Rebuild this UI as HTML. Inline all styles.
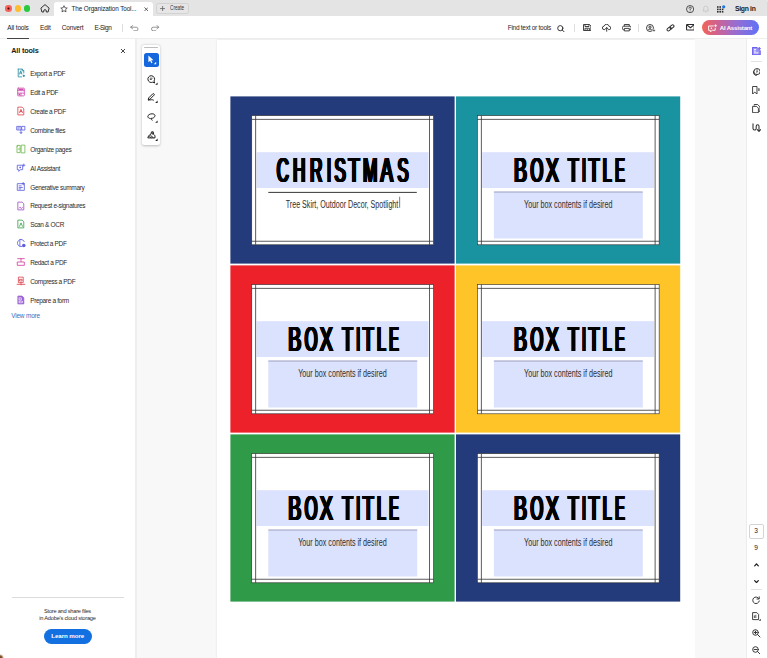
<!DOCTYPE html>
<html><head><meta charset="utf-8">
<style>
*{margin:0;padding:0;box-sizing:border-box}
html,body{width:768px;height:658px;overflow:hidden;background:#fff;font-family:"Liberation Sans",sans-serif;color:#222}
.a{position:absolute}
.t{position:absolute;white-space:nowrap;line-height:1}
</style></head><body>
<!-- tab bar -->
<div class="a" style="left:0;top:0;width:768px;height:16px;background:#e4e4e4"></div>
<div class="a" style="left:5.2px;top:5.2px;width:6.4px;height:6.4px;border-radius:50%;background:radial-gradient(circle,#4a0606 0,#6a1010 0.6px,#f7645d 1.6px)"></div>
<div class="a" style="left:14.7px;top:5.2px;width:6.4px;height:6.4px;border-radius:50%;background:#fdbd2e"></div>
<div class="a" style="left:24.1px;top:5.2px;width:6.4px;height:6.4px;border-radius:50%;background:#28c840"></div>
<div class="a" style="left:54px;top:1.5px;width:99px;height:15px;background:#fff;border-radius:3px 3px 0 0"></div>
<div class="a" style="left:155.5px;top:3.2px;width:33px;height:11.2px;border:0.6px solid #d2d2d2;border-radius:2.5px;background:#e6e6e6"></div>
<div class="t" style="left:169.9px;top:5.1px;font-size:6.7px;color:#333;transform:scaleX(0.7);transform-origin:0 0">Create</div>
<div class="t" style="left:735px;top:6.3px;font-size:6.8px;letter-spacing:-0.3px;font-weight:bold;color:#1a1a1a">Sign in</div>
<!-- toolbar -->
<div class="a" style="left:0;top:16px;width:768px;height:23px;background:#fff;border-bottom:1px solid #eeeeee;box-shadow:0 0.5px 1px rgba(0,0,0,0.03)"></div>
<div class="t" style="left:7.3px;top:24.5px;font-size:6.5px;letter-spacing:-0.15px">All tools</div>
<div class="a" style="left:7.3px;top:37.5px;width:22px;height:1.5px;background:#444"></div>
<div class="t" style="left:40px;top:24.5px;font-size:6.5px;letter-spacing:-0.15px">Edit</div>
<div class="t" style="left:61.7px;top:24.5px;font-size:6.5px;letter-spacing:-0.15px">Convert</div>
<div class="t" style="left:94.5px;top:24.5px;font-size:6.5px;letter-spacing:-0.45px">E-Sign</div>
<div class="t" style="left:507.7px;top:24.6px;font-size:6.5px;letter-spacing:-0.27px;color:#1f1f1f">Find text or tools</div>
<div class="a" style="left:702.2px;top:20.3px;width:57.3px;height:15px;border-radius:8px;background:linear-gradient(90deg,#f26457 0%,#cc6294 28%,#9a6dcf 58%,#5e72f7 100%)"></div>
<div class="t" style="left:719.8px;top:25px;font-size:6px;font-weight:bold;color:#fff;letter-spacing:-0.18px">AI Assistant</div>

<!-- left panel -->
<div class="a" style="left:0;top:39px;width:135px;height:619px;background:#fff"></div>
<div class="a" style="left:135px;top:39px;width:2.3px;height:619px;background:#eeeeee"></div>
<div class="a" style="left:137.3px;top:39px;width:79.7px;height:619px;background:#f8f8f8"></div>
<div class="a" style="left:217px;top:39.5px;width:478px;height:619px;background:#fff;box-shadow:0 0 2.5px rgba(0,0,0,0.09)"></div>
<div class="a" style="left:695px;top:39px;width:50.5px;height:619px;background:#f8f8f8"></div>
<div class="a" style="left:745.5px;top:39px;width:22.5px;height:619px;background:#fff;border-left:1px solid #ececec"></div>

<div class="t" style="left:11.2px;top:47.3px;font-size:7.3px;letter-spacing:-0.15px;font-weight:bold;color:#1d1d1d">All tools</div>

<svg class="a" style="left:15.8px;top:68.00px" width="10" height="10" viewBox="0 0 18 18" stroke="#2a8fa3" stroke-width="1.5" stroke-linejoin="round" stroke-linecap="round"><path d="M4 2h7l3 3v4M4 2v14h6M11 2v3h3" fill="none"/><path d="M6.5 11l2-6 2 6M7.2 9h2.6" fill="none"/><circle cx="14" cy="14" r="2" fill="#2a8fa3" stroke="none"/></svg>
<div class="t" style="left:30.2px;top:71.40px;font-size:6.5px;letter-spacing:-0.34px;color:#2b2b2b">Export a PDF</div>
<svg class="a" style="left:15.8px;top:86.93px" width="10" height="10" viewBox="0 0 18 18" stroke="#d24fb0" stroke-width="1.5" stroke-linejoin="round" stroke-linecap="round"><rect x="3" y="2" width="12" height="14" rx="1" fill="none"/><path d="M3 6.5h12M3 11h12M9 11v5" fill="none"/><rect x="4.5" y="3" width="9" height="2.5" fill="#d24fb0" stroke="none"/><rect x="4.5" y="12" width="3" height="3" fill="#d24fb0" stroke="none"/></svg>
<div class="t" style="left:30.2px;top:90.25px;font-size:6.5px;letter-spacing:-0.34px;color:#2b2b2b">Edit a PDF</div>
<svg class="a" style="left:15.8px;top:105.86px" width="10" height="10" viewBox="0 0 18 18" stroke="#dd4550" stroke-width="1.5" stroke-linejoin="round" stroke-linecap="round"><path d="M4 2h7l3 3v11H4z" fill="none"/><path d="M6.5 12l2.5-6 2.5 6M7.5 10h3" fill="none"/></svg>
<div class="t" style="left:30.2px;top:109.10px;font-size:6.5px;letter-spacing:-0.34px;color:#2b2b2b">Create a PDF</div>
<svg class="a" style="left:15.8px;top:124.79px" width="10" height="10" viewBox="0 0 18 18" stroke="#5d5fe0" stroke-width="1.5" stroke-linejoin="round" stroke-linecap="round"><rect x="2" y="2.5" width="7" height="6.5" fill="none"/><rect x="11" y="2.5" width="5" height="6.5" fill="none"/><path d="M3.5 5h3M3.5 7h2" stroke-width="1.2"/><path d="M9 9v6M7 13l2 2.2 2-2.2" fill="none"/></svg>
<div class="t" style="left:30.2px;top:127.95px;font-size:6.5px;letter-spacing:-0.34px;color:#2b2b2b">Combine files</div>
<svg class="a" style="left:15.8px;top:143.72px" width="10" height="10" viewBox="0 0 18 18" stroke="#72bb52" stroke-width="1.5" stroke-linejoin="round" stroke-linecap="round"><rect x="10" y="2" width="6" height="14" fill="none"/><path d="M2.5 2.5h5v13h-5zM4 9h3" fill="none"/><path d="M2 5l2-2" fill="none"/></svg>
<div class="t" style="left:30.2px;top:146.80px;font-size:6.5px;letter-spacing:-0.34px;color:#2b2b2b">Organize pages</div>
<svg class="a" style="left:15.8px;top:162.65px" width="10" height="10" viewBox="0 0 18 18" stroke="#5d5fe0" stroke-width="1.5" stroke-linejoin="round" stroke-linecap="round"><path d="M3 4h9v8H8l-3 3v-3H3z" fill="none"/><path d="M14 2v4M12 4h4" fill="none"/><circle cx="7.5" cy="8" r="1.5" fill="#5d5fe0" stroke="none"/></svg>
<div class="t" style="left:30.2px;top:165.65px;font-size:6.5px;letter-spacing:-0.34px;color:#2b2b2b">AI Assistant</div>
<svg class="a" style="left:15.8px;top:181.58px" width="10" height="10" viewBox="0 0 18 18" stroke="#5d5fe0" stroke-width="1.5" stroke-linejoin="round" stroke-linecap="round"><rect x="3" y="3" width="12" height="12" fill="none"/><path d="M5.5 7h4M5.5 10h6M5.5 12.5h3" fill="none"/><path d="M13 1v4M11 3h4" fill="none"/></svg>
<div class="t" style="left:30.2px;top:184.50px;font-size:6.5px;letter-spacing:-0.34px;color:#2b2b2b">Generative summary</div>
<svg class="a" style="left:15.8px;top:200.51px" width="10" height="10" viewBox="0 0 18 18" stroke="#a652c8" stroke-width="1.5" stroke-linejoin="round" stroke-linecap="round"><path d="M4 2h7l3 3v11H4z" fill="none"/><path d="M6 12.5c1-2 2-2 2.5 0s1.5 1 3.5-1" fill="none"/></svg>
<div class="t" style="left:30.2px;top:203.35px;font-size:6.5px;letter-spacing:-0.34px;color:#2b2b2b">Request e-signatures</div>
<svg class="a" style="left:15.8px;top:219.44px" width="10" height="10" viewBox="0 0 18 18" stroke="#3aa34a" stroke-width="1.5" stroke-linejoin="round" stroke-linecap="round"><path d="M4 2h7l3 3v11H4z" fill="none"/><path d="M6.5 13l2.5-6 2.5 6" fill="none"/></svg>
<div class="t" style="left:30.2px;top:222.20px;font-size:6.5px;letter-spacing:-0.34px;color:#2b2b2b">Scan &amp; OCR</div>
<svg class="a" style="left:15.8px;top:238.37px" width="10" height="10" viewBox="0 0 18 18" stroke="#5d5fe0" stroke-width="1.5" stroke-linejoin="round" stroke-linecap="round"><path d="M9 2.5a6.5 6.5 0 1 0 2 12.7" fill="none"/><path d="M9 2.5a6.5 6.5 0 0 1 6 4" fill="none"/><path d="M7 3v12" fill="none"/><circle cx="14" cy="13.5" r="3.2" fill="#5d5fe0" stroke="none"/></svg>
<div class="t" style="left:30.2px;top:241.05px;font-size:6.5px;letter-spacing:-0.34px;color:#2b2b2b">Protect a PDF</div>
<svg class="a" style="left:15.8px;top:257.30px" width="10" height="10" viewBox="0 0 18 18" stroke="#d63f9c" stroke-width="1.5" stroke-linejoin="round" stroke-linecap="round"><path d="M3 3h12M9 3v5" fill="none"/><rect x="3" y="9" width="12" height="6" fill="none"/></svg>
<div class="t" style="left:30.2px;top:259.90px;font-size:6.5px;letter-spacing:-0.34px;color:#2b2b2b">Redact a PDF</div>
<svg class="a" style="left:15.8px;top:276.23px" width="10" height="10" viewBox="0 0 18 18" stroke="#dd4550" stroke-width="1.5" stroke-linejoin="round" stroke-linecap="round"><path d="M5 2h8v10H5z" fill="none"/><path d="M2 15h14M9 12v4" fill="none"/><path d="M7 6h4v3H7z" fill="none"/></svg>
<div class="t" style="left:30.2px;top:278.75px;font-size:6.5px;letter-spacing:-0.34px;color:#2b2b2b">Compress a PDF</div>
<svg class="a" style="left:15.8px;top:295.16px" width="10" height="10" viewBox="0 0 18 18" stroke="#9b5fd6" stroke-width="1.5" stroke-linejoin="round" stroke-linecap="round"><path d="M4 2h7l3 3v11H4z" fill="#9b5fd6"/><path d="M6.5 11h5v3h-5zM6.5 5h3v4h-3z" fill="none" stroke="#fff" stroke-width="1.2"/></svg>
<div class="t" style="left:30.2px;top:297.60px;font-size:6.5px;letter-spacing:-0.34px;color:#2b2b2b">Prepare a form</div>
<div class="t" style="left:11.2px;top:313.2px;font-size:6.5px;letter-spacing:-0.2px;color:#3b6ec2">View more</div>
<svg class="a" style="left:120px;top:48.1px" width="6" height="6" viewBox="0 0 6 6" stroke="#333" stroke-width="0.9"><path d="M1 1l4 4M5 1l-4 4"/></svg>
<div class="a" style="left:12.4px;top:597.3px;width:111.6px;height:0.7px;background:#dcdcdc"></div>
<div class="t" style="left:0;width:135px;text-align:center;top:608.9px;font-size:5.7px;letter-spacing:-0.25px;color:#2b2b2b">Store and share files</div>
<div class="t" style="left:0;width:135px;text-align:center;top:615.7px;font-size:5.7px;letter-spacing:-0.22px;color:#2b2b2b">in Adobe's cloud storage</div>
<div class="a" style="left:43.7px;top:628.9px;width:48px;height:15px;border-radius:8px;background:#1270e0"></div>
<div class="t" style="left:43.7px;width:48px;text-align:center;top:633px;font-size:6.2px;font-weight:bold;color:#fff;letter-spacing:-0.1px">Learn more</div>

<!--ICONS-->
<!-- home -->
<svg class="a" style="left:40.2px;top:4.4px" width="10" height="8.6" viewBox="0 0 10 8.6" fill="none" stroke="#2a2a2a" stroke-width="0.95" stroke-linejoin="round"><path d="M5 0.6L0.9 4.1 1.9 8H3.7V7A1.3 1.3 0 0 1 6.3 7V8H8.1L9.1 4.1z"/></svg>
<!-- star -->
<svg class="a" style="left:59.8px;top:5px" width="8" height="8" viewBox="0 0 8 8" fill="none" stroke="#333" stroke-width="0.75" stroke-linejoin="round"><path d="M4 0.7l0.95 2.1 2.3 0.25-1.7 1.55 0.5 2.25L4 5.7 1.95 6.85l0.5-2.25L0.75 3.05l2.3-0.25z"/></svg>
<div class="t" style="left:71.5px;top:6.1px;font-size:6.4px;letter-spacing:-0.12px;color:#1a1a1a">The Organization Tool...</div>
<svg class="a" style="left:143.8px;top:6.8px" width="4.5" height="4.5" viewBox="0 0 5 5" stroke="#444" stroke-width="0.9"><path d="M0.5 0.5l4 4M4.5 0.5l-4 4"/></svg>
<svg class="a" style="left:159.9px;top:6.1px" width="5.2" height="5.2" viewBox="0 0 5 5" stroke="#555" stroke-width="0.7"><path d="M2.5 0v5M0 2.5h5"/></svg>
<!-- help -->
<svg class="a" style="left:686.3px;top:5.2px" width="8.2" height="8.2" viewBox="0 0 8 8" fill="none" stroke="#2e2e2e" stroke-width="0.8"><circle cx="4" cy="4" r="3.5"/><path d="M2.9 3.1a1.1 1.1 0 1 1 1.5 1c-0.35 0.15-0.4 0.4-0.4 0.8" stroke-linecap="round"/><circle cx="4" cy="6" r="0.4" fill="#2e2e2e" stroke="none"/></svg>
<!-- bell -->
<svg class="a" style="left:701.8px;top:5.4px" width="7.6" height="7.8" viewBox="0 0 8 8" fill="none" stroke="#c4c4c4" stroke-width="0.8"><path d="M1 6.2h6l-0.8-1V3.2a2.2 2.2 0 0 0-4.4 0v2z"/><path d="M3.2 7.2h1.6"/></svg>
<!-- apps grid -->
<svg class="a" style="left:716.8px;top:4.8px" width="9" height="8.5" viewBox="0 -0.7 9 8.5" fill="#2e2e2e"><rect x="0" y="0.5" width="1.6" height="1.6"/><rect x="2.4" y="0.5" width="1.6" height="1.6"/><rect x="0" y="2.9" width="1.6" height="1.6"/><rect x="2.4" y="2.9" width="1.6" height="1.6"/><rect x="4.8" y="2.9" width="1.6" height="1.6"/><rect x="0" y="5.3" width="1.6" height="1.6"/><rect x="2.4" y="5.3" width="1.6" height="1.6"/><rect x="4.8" y="5.3" width="1.6" height="1.6"/><circle cx="6.7" cy="1.1" r="1.6" fill="#1a73e8"/></svg>
<!-- toolbar separators -->
<div class="a" style="left:122.2px;top:24px;width:0.8px;height:7.8px;background:#dedede"></div>
<div class="a" style="left:574px;top:24px;width:0.8px;height:7.8px;background:#dedede"></div>
<div class="a" style="left:638px;top:24px;width:0.8px;height:7.8px;background:#dedede"></div>
<!-- undo / redo -->
<svg class="a" style="left:130px;top:24.6px" width="9.5" height="6.2" viewBox="0 0 9.5 6.2" fill="none" stroke="#8a8a8a" stroke-width="0.9" stroke-linecap="round" stroke-linejoin="round"><path d="M2.6 0.6L0.6 2.2l2 1.6"/><path d="M0.8 2.2h5.4a1.8 1.8 0 0 1 0 3.6H3.8"/></svg>
<svg class="a" style="left:150px;top:24.6px" width="9.5" height="6.2" viewBox="0 0 9.5 6.2" fill="none" stroke="#8a8a8a" stroke-width="0.9" stroke-linecap="round" stroke-linejoin="round"><path d="M6.9 0.6l2 1.6-2 1.6"/><path d="M8.7 2.2H3.3a1.8 1.8 0 0 0 0 3.6h2.4"/></svg>
<!-- search -->
<svg class="a" style="left:556.8px;top:24.8px" width="8.4" height="7.2" viewBox="0 0 8.4 7.2" fill="none" stroke="#2e2e2e" stroke-width="0.95" stroke-linecap="round"><circle cx="3.3" cy="3.2" r="2.6"/><path d="M5.2 5.1l2.2 1.9"/></svg>
<!-- save -->
<svg class="a" style="left:582.5px;top:24.3px" width="8.4" height="7" viewBox="0 0 8.4 7" fill="none" stroke="#2e2e2e" stroke-width="0.9" stroke-linejoin="round"><path d="M0.5 0.5h6l1.4 1.4v4.6H0.5z"/><path d="M2 0.5v2h4v-2M2 6.5V4.2h4.4v2.3"/><rect x="3.7" y="4.8" width="1" height="1.4" fill="#2e2e2e" stroke="none"/></svg>
<!-- upload cloud -->
<svg class="a" style="left:602px;top:24.4px" width="9.4" height="7.6" viewBox="0 0 9.4 7.6" fill="none" stroke="#2e2e2e" stroke-width="0.9" stroke-linecap="round" stroke-linejoin="round"><path d="M2.8 5.6H2.2a1.7 1.7 0 0 1-0.2-3.4 2.7 2.7 0 0 1 5.2 0.2 1.6 1.6 0 0 1 0 3.2H6.6"/><path d="M4.7 7.3V3.6M3.3 5l1.4-1.4L6.1 5"/></svg>
<!-- print -->
<svg class="a" style="left:621.5px;top:24.3px" width="9.6" height="7.4" viewBox="0 0 9.6 7.4" fill="none" stroke="#2e2e2e" stroke-width="0.9" stroke-linejoin="round"><path d="M2.3 2.2V0.5h5v1.7"/><rect x="0.5" y="2.2" width="8.6" height="3.6" rx="1.2"/><path d="M2.3 4.4h5v2.5h-5z" fill="#fff"/></svg>
<!-- share person -->
<svg class="a" style="left:645.5px;top:23.6px" width="10" height="8.2" viewBox="0 0 10 8.2" fill="none" stroke="#2e2e2e" stroke-width="0.9"><circle cx="4" cy="4" r="3.5"/><circle cx="4" cy="3.2" r="1.1"/><path d="M2.1 6.2a2.1 2.1 0 0 1 3.8 0"/><path d="M8 4.6l0.5 1.3 1.3 0.5-1.3 0.5L8 8.2 7.5 6.9 6.2 6.4 7.5 5.9z" fill="#2e2e2e" stroke="#fff" stroke-width="0.4"/></svg>
<!-- link -->
<svg class="a" style="left:665.6px;top:24px" width="9" height="7.8" viewBox="0 0 9 7.8" fill="none" stroke="#2a2a2a" stroke-width="0.95"><g transform="rotate(-40 4.5 3.9)"><rect x="0.4" y="2.6" width="4.6" height="2.6" rx="1.3"/><rect x="4" y="2.6" width="4.6" height="2.6" rx="1.3"/></g></svg>
<!-- mail -->
<svg class="a" style="left:685.6px;top:24.3px" width="8.8" height="7" viewBox="0 0 8.8 7" fill="none" stroke="#2e2e2e" stroke-width="1.1" stroke-linejoin="round"><rect x="0.55" y="0.55" width="7.7" height="5.5" rx="0.6"/><path d="M0.8 0.9l3.6 2.8 3.6-2.8"/></svg>
<!-- AI icon -->
<svg class="a" style="left:707.8px;top:24px" width="9.4" height="8.4" viewBox="0 0 9.4 8.4" fill="none" stroke="#fff" stroke-width="0.9" stroke-linejoin="round"><path d="M0.6 2h5.2M7.2 3.8v2.5H4.2L2.4 7.9V6.3H0.6V2"/><circle cx="3.4" cy="4.3" r="0.8" fill="#fff" stroke="none"/><path d="M7.6 0.3v2.8M6.2 1.7h2.8" stroke-width="0.8"/></svg>
<!-- floating tools panel -->
<div class="a" style="left:142.2px;top:45px;width:18px;height:99.7px;background:#fff;border-radius:2.5px;box-shadow:0 0.5px 2.5px rgba(0,0,0,0.25)"></div>
<div class="a" style="left:144px;top:46.8px;width:14px;height:1.4px;background:#bdbdbd;border-radius:1px"></div>
<div class="a" style="left:144px;top:52.5px;width:14.8px;height:14.6px;background:#1567dd;border-radius:2.5px"></div>
<svg class="a" style="left:146.6px;top:55px" width="10" height="10" viewBox="0 0 10 10"><path d="M1.4 0.6v6.6l1.7-1.5 1.3 2.6 1.1-0.55-1.3-2.5h2.3z" fill="#fff"/><path d="M9.2 6.8v2.4H6.8z" fill="#fff"/></svg>
<svg class="a" style="left:146.6px;top:75px" width="11" height="10" viewBox="0 0 11 10" fill="none" stroke="#222" stroke-width="1"><path d="M4.2 0.7a3.4 3.4 0 1 0 1.5 6.5l2 0.8-0.7-2a3.4 3.4 0 0 0-2.8-5.3z"/><path d="M2.8 3.2h2.8M2.8 4.5h2" stroke-width="0.75"/><path d="M10.6 7.4v2.4H8.2z" fill="#222" stroke="none"/></svg>
<svg class="a" style="left:146.6px;top:93.2px" width="11" height="10" viewBox="0 0 11 10" fill="none" stroke="#222" stroke-width="1" stroke-linejoin="round"><path d="M1.2 6.8l0.5-1.9 4-4a0.9 0.9 0 0 1 1.3 1.3l-4 4z"/><path d="M1.2 7.3c2-0.6 4.5-0.9 5.6 0"/><path d="M10.6 7.6v2.4H8.2z" fill="#222" stroke="none"/></svg>
<svg class="a" style="left:146.6px;top:112.6px" width="11" height="10" viewBox="0 0 11 10" fill="none" stroke="#222" stroke-width="1"><path d="M3.6 5.6C2 5.4 0.8 4.7 0.8 3.5 0.8 2 2.9 0.8 5.1 0.8c1.8 0 2.9 0.8 2.9 1.9 0 1.5-1.9 2.7-4 2.7 0 0.9 0.6 1.6 1.6 1.9"/><path d="M10.6 7.4v2.4H8.2z" fill="#222" stroke="none"/></svg>
<svg class="a" style="left:146.6px;top:131.4px" width="11" height="10" viewBox="0 0 11 10" fill="none" stroke="#222" stroke-width="1" stroke-linejoin="round"><path d="M0.8 6.9l0.9-2.3 2-1.2 0.9-2.6h1.6l0.5 2.6 1.3 1.4v2.1z"/><path d="M2.3 5.2l2 1.7M3.4 4.2l3 2.6"/><circle cx="5.6" cy="2.5" r="0.6"/><path d="M10.6 7.6v2.4H8.2z" fill="#222" stroke="none"/></svg>
<!-- right sidebar -->
<svg class="a" style="left:751.6px;top:46.8px" width="9" height="8.4" viewBox="0 0 9 8.4" fill="none" stroke="#6b5ff0" stroke-width="1.05"><path d="M5.4 0.6H0.6v7.2h7.6V3.6" fill="#9d95f4"/><path d="M2 2.6h2M2 4.2h1.6M2 5.9h4.4" stroke="#fff" stroke-width="0.9"/><path d="M7.3 0l0.45 1.15 1.15 0.45-1.15 0.45-0.45 1.15-0.45-1.15-1.15-0.45 1.15-0.45z" fill="#6b5ff0" stroke="#6b5ff0" stroke-width="0.5"/></svg>
<div class="a" style="left:751.3px;top:61.4px;width:10.3px;height:0.7px;background:#e2e2e2"></div>
<svg class="a" style="left:751.8px;top:68.3px" width="8.6" height="8" viewBox="0 0 8.6 8" fill="none" stroke="#2e2e2e" stroke-width="0.9"><circle cx="5" cy="3.6" r="3.1"/><path d="M2.4 2.2A3 3 0 0 0 4.8 7.4"/><path d="M4.2 2h1.8M4.2 3.4h1.8M4.2 4.8h1.2" stroke-width="0.7"/></svg>
<svg class="a" style="left:751.8px;top:85.8px" width="8.6" height="8.4" viewBox="0 0 8.6 8.4" fill="none" stroke="#2e2e2e" stroke-width="0.9" stroke-linejoin="round"><path d="M0.6 0.5h4.4v7.5L2.8 6.2 0.6 8z"/><path d="M6.6 2.2v2.8M7.9 2.2v2.8" stroke-width="0.7"/></svg>
<svg class="a" style="left:751.8px;top:104.2px" width="8.6" height="9.2" viewBox="0 0 8.6 9.2" fill="none" stroke="#2e2e2e" stroke-width="0.9" stroke-linejoin="round"><path d="M2.2 1.6V0.5h3.4l2.4 2.4v4.4H6.6"/><path d="M0.6 2.4h4l1.8 1.8v4.5H0.6z"/></svg>
<svg class="a" style="left:751.8px;top:123px" width="9" height="9" viewBox="0 0 9 9" fill="none" stroke="#2e2e2e" stroke-width="1.05" stroke-linecap="round" stroke-linejoin="round"><path d="M1 0.8v4.6a1.6 1.6 0 0 0 3.2 0V3.2a1.4 1.4 0 0 1 2.8 0V8"/><path d="M5.3 6.6L7 8.3 8.7 6.6"/></svg>
<!-- page nav -->
<div class="a" style="left:748.6px;top:524.2px;width:15px;height:14.8px;border:0.7px solid #d4d4d4;border-radius:2px;background:#fff"></div>
<div class="t" style="left:748.6px;width:15px;text-align:center;top:527.5px;font-size:6.6px;color:#1e1e1e">3</div>
<div class="t" style="left:748.6px;width:15px;text-align:center;top:544.5px;font-size:6.6px;color:#1e1e1e">9</div>
<svg class="a" style="left:753.6px;top:563.4px" width="5" height="3.4" viewBox="0 0 5 3.4" fill="none" stroke="#1e1e1e" stroke-width="1.25" stroke-linecap="round" stroke-linejoin="round"><path d="M0.7 2.8L2.5 0.8l1.8 2"/></svg>
<svg class="a" style="left:753.6px;top:579.8px" width="5" height="3.4" viewBox="0 0 5 3.4" fill="none" stroke="#1e1e1e" stroke-width="1.25" stroke-linecap="round" stroke-linejoin="round"><path d="M0.7 0.6L2.5 2.6l1.8-2"/></svg>
<div class="a" style="left:751px;top:589.2px;width:11px;height:0.7px;background:#e2e2e2"></div>
<svg class="a" style="left:752.2px;top:595.6px" width="8.4" height="8.4" viewBox="0 0 8.4 8.4" fill="none" stroke="#2e2e2e" stroke-width="0.95" stroke-linecap="round"><path d="M6.9 2.6A3.3 3.3 0 1 0 7.3 5"/><path d="M7.2 0.8v2.2H5" stroke-linejoin="round"/></svg>
<svg class="a" style="left:752px;top:612px" width="9" height="9" viewBox="0 0 9 9" fill="none" stroke="#2e2e2e" stroke-width="0.9" stroke-linejoin="round"><path d="M0.6 0.6h4.2l1.8 1.8v5.2H0.6z"/><path d="M2.4 6V3.4M3.8 6V2.8" stroke-width="0.8"/><path d="M8.8 6.8v2h-2z" fill="#2e2e2e" stroke="none"/></svg>
<svg class="a" style="left:752.2px;top:629.4px" width="8.6" height="8.6" viewBox="0 0 8.6 8.6" fill="none" stroke="#2e2e2e" stroke-width="0.95" stroke-linecap="round"><circle cx="3.5" cy="3.5" r="2.8"/><path d="M5.6 5.6l2.4 2.4M3.5 2.2v2.6M2.2 3.5h2.6"/></svg>
<svg class="a" style="left:752.2px;top:645.8px" width="8.6" height="8.6" viewBox="0 0 8.6 8.6" fill="none" stroke="#2e2e2e" stroke-width="0.95" stroke-linecap="round"><circle cx="3.5" cy="3.5" r="2.8"/><path d="M5.6 5.6l2.4 2.4M2.2 3.5h2.6"/></svg>
<!--/ICONS-->

<div class="a" style="left:766.8px;top:2px;width:1.2px;height:656px;background:#d6d6d6"></div>
<div class="a" style="left:766.8px;top:51.7px;width:1.2px;height:15.4px;background:#c5d3e6"></div>
<div class="a" style="left:0;top:652px;width:6px;height:6px;background:radial-gradient(circle at 0 100%, #6b3a12 0, #8a5a2a 2px, rgba(255,255,255,0) 4px)"></div>
<!--PAGE-->
<svg class="a" style="left:0;top:0" width="768" height="658" viewBox="0 0 768 658">
<rect x="230.4" y="96.4" width="224.2" height="167.2" fill="#233a7b"/>
<rect x="251.75" y="115.60000000000001" width="181.8" height="129.2" fill="#fff" stroke="#2a2a2a" stroke-width="0.6"/>
<rect x="256.60" y="152.20" width="171.9" height="35.8" fill="#dbe2fd"/>
<rect x="255.30" y="115.60" width="0.8" height="129.2" fill="#363636"/>
<rect x="429.10" y="115.60" width="0.8" height="129.2" fill="#363636"/>
<rect x="251.75" y="118.90" width="181.8" height="0.8" fill="#363636"/>
<rect x="251.75" y="240.80" width="181.8" height="0.8" fill="#363636"/>
<rect x="268.30" y="191.90" width="148.5" height="0.9" fill="#222"/>
<g font-family="Liberation Sans" font-size="34.2" fill="#000"><text transform="translate(275.65,182.40) scale(0.4900,1)">C</text><text transform="translate(275.65,181.80) scale(0.4900,1)">C</text><text transform="translate(276.32,182.40) scale(0.4900,1)">C</text><text transform="translate(276.32,181.80) scale(0.4900,1)">C</text><text transform="translate(276.98,182.40) scale(0.4900,1)">C</text><text transform="translate(276.98,181.80) scale(0.4900,1)">C</text><text transform="translate(277.65,182.40) scale(0.4900,1)">C</text><text transform="translate(277.65,181.80) scale(0.4900,1)">C</text><text transform="translate(291.95,182.40) scale(0.5022,1)">H</text><text transform="translate(291.95,181.80) scale(0.5022,1)">H</text><text transform="translate(292.62,182.40) scale(0.5022,1)">H</text><text transform="translate(292.62,181.80) scale(0.5022,1)">H</text><text transform="translate(293.28,182.40) scale(0.5022,1)">H</text><text transform="translate(293.28,181.80) scale(0.5022,1)">H</text><text transform="translate(293.95,182.40) scale(0.5022,1)">H</text><text transform="translate(293.95,181.80) scale(0.5022,1)">H</text><text transform="translate(309.05,182.40) scale(0.5022,1)">R</text><text transform="translate(309.05,181.80) scale(0.5022,1)">R</text><text transform="translate(309.72,182.40) scale(0.5022,1)">R</text><text transform="translate(309.72,181.80) scale(0.5022,1)">R</text><text transform="translate(310.38,182.40) scale(0.5022,1)">R</text><text transform="translate(310.38,181.80) scale(0.5022,1)">R</text><text transform="translate(311.05,182.40) scale(0.5022,1)">R</text><text transform="translate(311.05,181.80) scale(0.5022,1)">R</text><text transform="translate(326.15,182.40) scale(0.3786,1)">I</text><text transform="translate(326.15,181.80) scale(0.3786,1)">I</text><text transform="translate(326.82,182.40) scale(0.3786,1)">I</text><text transform="translate(326.82,181.80) scale(0.3786,1)">I</text><text transform="translate(327.48,182.40) scale(0.3786,1)">I</text><text transform="translate(327.48,181.80) scale(0.3786,1)">I</text><text transform="translate(328.15,182.40) scale(0.3786,1)">I</text><text transform="translate(328.15,181.80) scale(0.3786,1)">I</text><text transform="translate(333.45,182.40) scale(0.4954,1)">S</text><text transform="translate(333.45,181.80) scale(0.4954,1)">S</text><text transform="translate(334.12,182.40) scale(0.4954,1)">S</text><text transform="translate(334.12,181.80) scale(0.4954,1)">S</text><text transform="translate(334.78,182.40) scale(0.4954,1)">S</text><text transform="translate(334.78,181.80) scale(0.4954,1)">S</text><text transform="translate(335.45,182.40) scale(0.4954,1)">S</text><text transform="translate(335.45,181.80) scale(0.4954,1)">S</text><text transform="translate(347.25,182.40) scale(0.5503,1)">T</text><text transform="translate(347.25,181.80) scale(0.5503,1)">T</text><text transform="translate(347.92,182.40) scale(0.5503,1)">T</text><text transform="translate(347.92,181.80) scale(0.5503,1)">T</text><text transform="translate(348.58,182.40) scale(0.5503,1)">T</text><text transform="translate(348.58,181.80) scale(0.5503,1)">T</text><text transform="translate(349.25,182.40) scale(0.5503,1)">T</text><text transform="translate(349.25,181.80) scale(0.5503,1)">T</text><text transform="translate(361.95,182.40) scale(0.5055,1)">M</text><text transform="translate(361.95,181.80) scale(0.5055,1)">M</text><text transform="translate(362.62,182.40) scale(0.5055,1)">M</text><text transform="translate(362.62,181.80) scale(0.5055,1)">M</text><text transform="translate(363.28,182.40) scale(0.5055,1)">M</text><text transform="translate(363.28,181.80) scale(0.5055,1)">M</text><text transform="translate(363.95,182.40) scale(0.5055,1)">M</text><text transform="translate(363.95,181.80) scale(0.5055,1)">M</text><text transform="translate(379.45,182.40) scale(0.5480,1)">A</text><text transform="translate(379.45,181.80) scale(0.5480,1)">A</text><text transform="translate(380.12,182.40) scale(0.5480,1)">A</text><text transform="translate(380.12,181.80) scale(0.5480,1)">A</text><text transform="translate(380.78,182.40) scale(0.5480,1)">A</text><text transform="translate(380.78,181.80) scale(0.5480,1)">A</text><text transform="translate(381.45,182.40) scale(0.5480,1)">A</text><text transform="translate(381.45,181.80) scale(0.5480,1)">A</text><text transform="translate(396.55,182.40) scale(0.4822,1)">S</text><text transform="translate(396.55,181.80) scale(0.4822,1)">S</text><text transform="translate(397.22,182.40) scale(0.4822,1)">S</text><text transform="translate(397.22,181.80) scale(0.4822,1)">S</text><text transform="translate(397.88,182.40) scale(0.4822,1)">S</text><text transform="translate(397.88,181.80) scale(0.4822,1)">S</text><text transform="translate(398.55,182.40) scale(0.4822,1)">S</text><text transform="translate(398.55,181.80) scale(0.4822,1)">S</text></g>
<text transform="translate(285.75,207.70) scale(0.6308,1)" font-family="Liberation Sans" font-size="11.3" fill="#2e2e2e">Tree Skirt, Outdoor Decor, Spotlight</text>
<rect x="399.40" y="196.70" width="0.7" height="11" fill="#444"/>
<rect x="456.0" y="96.4" width="224.2" height="167.2" fill="#1a93a0"/>
<rect x="477.35" y="115.60000000000001" width="181.8" height="129.2" fill="#fff" stroke="#2a2a2a" stroke-width="0.6"/>
<rect x="482.20" y="152.20" width="171.9" height="35.8" fill="#dbe2fd"/>
<rect x="480.90" y="115.60" width="0.8" height="129.2" fill="#363636"/>
<rect x="654.70" y="115.60" width="0.8" height="129.2" fill="#363636"/>
<rect x="477.35" y="118.90" width="181.8" height="0.8" fill="#363636"/>
<rect x="477.35" y="240.80" width="181.8" height="0.8" fill="#363636"/>
<rect x="493.90" y="191.80" width="148.9" height="46.7" fill="#dbe2fd"/>
<rect x="493.90" y="191.60" width="148.9" height="0.8" fill="#8a90b0"/>
<g font-family="Liberation Sans" font-size="34.2" fill="#000"><text transform="translate(512.95,182.40) scale(0.5699,1)">B</text><text transform="translate(512.95,181.80) scale(0.5699,1)">B</text><text transform="translate(513.62,182.40) scale(0.5699,1)">B</text><text transform="translate(513.62,181.80) scale(0.5699,1)">B</text><text transform="translate(514.28,182.40) scale(0.5699,1)">B</text><text transform="translate(514.28,181.80) scale(0.5699,1)">B</text><text transform="translate(514.95,182.40) scale(0.5699,1)">B</text><text transform="translate(514.95,181.80) scale(0.5699,1)">B</text><text transform="translate(529.45,182.40) scale(0.4773,1)">O</text><text transform="translate(529.45,181.80) scale(0.4773,1)">O</text><text transform="translate(530.12,182.40) scale(0.4773,1)">O</text><text transform="translate(530.12,181.80) scale(0.4773,1)">O</text><text transform="translate(530.78,182.40) scale(0.4773,1)">O</text><text transform="translate(530.78,181.80) scale(0.4773,1)">O</text><text transform="translate(531.45,182.40) scale(0.4773,1)">O</text><text transform="translate(531.45,181.80) scale(0.4773,1)">O</text><text transform="translate(544.65,182.40) scale(0.5743,1)">X</text><text transform="translate(544.65,181.80) scale(0.5743,1)">X</text><text transform="translate(545.32,182.40) scale(0.5743,1)">X</text><text transform="translate(545.32,181.80) scale(0.5743,1)">X</text><text transform="translate(545.98,182.40) scale(0.5743,1)">X</text><text transform="translate(545.98,181.80) scale(0.5743,1)">X</text><text transform="translate(546.65,182.40) scale(0.5743,1)">X</text><text transform="translate(546.65,181.80) scale(0.5743,1)">X</text><text transform="translate(566.95,182.40) scale(0.5121,1)">T</text><text transform="translate(566.95,181.80) scale(0.5121,1)">T</text><text transform="translate(567.62,182.40) scale(0.5121,1)">T</text><text transform="translate(567.62,181.80) scale(0.5121,1)">T</text><text transform="translate(568.28,182.40) scale(0.5121,1)">T</text><text transform="translate(568.28,181.80) scale(0.5121,1)">T</text><text transform="translate(568.95,182.40) scale(0.5121,1)">T</text><text transform="translate(568.95,181.80) scale(0.5121,1)">T</text><text transform="translate(581.35,182.40) scale(0.3576,1)">I</text><text transform="translate(581.35,181.80) scale(0.3576,1)">I</text><text transform="translate(582.02,182.40) scale(0.3576,1)">I</text><text transform="translate(582.02,181.80) scale(0.3576,1)">I</text><text transform="translate(582.68,182.40) scale(0.3576,1)">I</text><text transform="translate(582.68,181.80) scale(0.3576,1)">I</text><text transform="translate(583.35,182.40) scale(0.3576,1)">I</text><text transform="translate(583.35,181.80) scale(0.3576,1)">I</text><text transform="translate(587.45,182.40) scale(0.5288,1)">T</text><text transform="translate(587.45,181.80) scale(0.5288,1)">T</text><text transform="translate(588.12,182.40) scale(0.5288,1)">T</text><text transform="translate(588.12,181.80) scale(0.5288,1)">T</text><text transform="translate(588.78,182.40) scale(0.5288,1)">T</text><text transform="translate(588.78,181.80) scale(0.5288,1)">T</text><text transform="translate(589.45,182.40) scale(0.5288,1)">T</text><text transform="translate(589.45,181.80) scale(0.5288,1)">T</text><text transform="translate(601.75,182.40) scale(0.4628,1)">L</text><text transform="translate(601.75,181.80) scale(0.4628,1)">L</text><text transform="translate(602.42,182.40) scale(0.4628,1)">L</text><text transform="translate(602.42,181.80) scale(0.4628,1)">L</text><text transform="translate(603.08,182.40) scale(0.4628,1)">L</text><text transform="translate(603.08,181.80) scale(0.4628,1)">L</text><text transform="translate(603.75,182.40) scale(0.4628,1)">L</text><text transform="translate(603.75,181.80) scale(0.4628,1)">L</text><text transform="translate(614.15,182.40) scale(0.4099,1)">E</text><text transform="translate(614.15,181.80) scale(0.4099,1)">E</text><text transform="translate(614.82,182.40) scale(0.4099,1)">E</text><text transform="translate(614.82,181.80) scale(0.4099,1)">E</text><text transform="translate(615.48,182.40) scale(0.4099,1)">E</text><text transform="translate(615.48,181.80) scale(0.4099,1)">E</text><text transform="translate(616.15,182.40) scale(0.4099,1)">E</text><text transform="translate(616.15,181.80) scale(0.4099,1)">E</text></g>
<text transform="translate(524.00,207.50) scale(0.6365,1)" font-family="Liberation Sans" font-size="11.3" fill="#2e2e2e">Your box contents if desired</text>
<rect x="230.4" y="265.4" width="224.2" height="167.2" fill="#ec2129"/>
<rect x="251.75" y="284.59999999999997" width="181.8" height="129.2" fill="#fff" stroke="#2a2a2a" stroke-width="0.6"/>
<rect x="256.60" y="321.20" width="171.9" height="35.8" fill="#dbe2fd"/>
<rect x="255.30" y="284.60" width="0.8" height="129.2" fill="#363636"/>
<rect x="429.10" y="284.60" width="0.8" height="129.2" fill="#363636"/>
<rect x="251.75" y="287.90" width="181.8" height="0.8" fill="#363636"/>
<rect x="251.75" y="409.80" width="181.8" height="0.8" fill="#363636"/>
<rect x="268.30" y="360.80" width="148.9" height="46.7" fill="#dbe2fd"/>
<rect x="268.30" y="360.60" width="148.9" height="0.8" fill="#8a90b0"/>
<g font-family="Liberation Sans" font-size="34.2" fill="#000"><text transform="translate(287.15,351.40) scale(0.5699,1)">B</text><text transform="translate(287.15,350.80) scale(0.5699,1)">B</text><text transform="translate(287.82,351.40) scale(0.5699,1)">B</text><text transform="translate(287.82,350.80) scale(0.5699,1)">B</text><text transform="translate(288.48,351.40) scale(0.5699,1)">B</text><text transform="translate(288.48,350.80) scale(0.5699,1)">B</text><text transform="translate(289.15,351.40) scale(0.5699,1)">B</text><text transform="translate(289.15,350.80) scale(0.5699,1)">B</text><text transform="translate(303.65,351.40) scale(0.4773,1)">O</text><text transform="translate(303.65,350.80) scale(0.4773,1)">O</text><text transform="translate(304.32,351.40) scale(0.4773,1)">O</text><text transform="translate(304.32,350.80) scale(0.4773,1)">O</text><text transform="translate(304.98,351.40) scale(0.4773,1)">O</text><text transform="translate(304.98,350.80) scale(0.4773,1)">O</text><text transform="translate(305.65,351.40) scale(0.4773,1)">O</text><text transform="translate(305.65,350.80) scale(0.4773,1)">O</text><text transform="translate(318.85,351.40) scale(0.5743,1)">X</text><text transform="translate(318.85,350.80) scale(0.5743,1)">X</text><text transform="translate(319.52,351.40) scale(0.5743,1)">X</text><text transform="translate(319.52,350.80) scale(0.5743,1)">X</text><text transform="translate(320.18,351.40) scale(0.5743,1)">X</text><text transform="translate(320.18,350.80) scale(0.5743,1)">X</text><text transform="translate(320.85,351.40) scale(0.5743,1)">X</text><text transform="translate(320.85,350.80) scale(0.5743,1)">X</text><text transform="translate(341.15,351.40) scale(0.5121,1)">T</text><text transform="translate(341.15,350.80) scale(0.5121,1)">T</text><text transform="translate(341.82,351.40) scale(0.5121,1)">T</text><text transform="translate(341.82,350.80) scale(0.5121,1)">T</text><text transform="translate(342.48,351.40) scale(0.5121,1)">T</text><text transform="translate(342.48,350.80) scale(0.5121,1)">T</text><text transform="translate(343.15,351.40) scale(0.5121,1)">T</text><text transform="translate(343.15,350.80) scale(0.5121,1)">T</text><text transform="translate(355.55,351.40) scale(0.3576,1)">I</text><text transform="translate(355.55,350.80) scale(0.3576,1)">I</text><text transform="translate(356.22,351.40) scale(0.3576,1)">I</text><text transform="translate(356.22,350.80) scale(0.3576,1)">I</text><text transform="translate(356.88,351.40) scale(0.3576,1)">I</text><text transform="translate(356.88,350.80) scale(0.3576,1)">I</text><text transform="translate(357.55,351.40) scale(0.3576,1)">I</text><text transform="translate(357.55,350.80) scale(0.3576,1)">I</text><text transform="translate(361.65,351.40) scale(0.5288,1)">T</text><text transform="translate(361.65,350.80) scale(0.5288,1)">T</text><text transform="translate(362.32,351.40) scale(0.5288,1)">T</text><text transform="translate(362.32,350.80) scale(0.5288,1)">T</text><text transform="translate(362.98,351.40) scale(0.5288,1)">T</text><text transform="translate(362.98,350.80) scale(0.5288,1)">T</text><text transform="translate(363.65,351.40) scale(0.5288,1)">T</text><text transform="translate(363.65,350.80) scale(0.5288,1)">T</text><text transform="translate(375.95,351.40) scale(0.4628,1)">L</text><text transform="translate(375.95,350.80) scale(0.4628,1)">L</text><text transform="translate(376.62,351.40) scale(0.4628,1)">L</text><text transform="translate(376.62,350.80) scale(0.4628,1)">L</text><text transform="translate(377.28,351.40) scale(0.4628,1)">L</text><text transform="translate(377.28,350.80) scale(0.4628,1)">L</text><text transform="translate(377.95,351.40) scale(0.4628,1)">L</text><text transform="translate(377.95,350.80) scale(0.4628,1)">L</text><text transform="translate(388.35,351.40) scale(0.4099,1)">E</text><text transform="translate(388.35,350.80) scale(0.4099,1)">E</text><text transform="translate(389.02,351.40) scale(0.4099,1)">E</text><text transform="translate(389.02,350.80) scale(0.4099,1)">E</text><text transform="translate(389.68,351.40) scale(0.4099,1)">E</text><text transform="translate(389.68,350.80) scale(0.4099,1)">E</text><text transform="translate(390.35,351.40) scale(0.4099,1)">E</text><text transform="translate(390.35,350.80) scale(0.4099,1)">E</text></g>
<text transform="translate(298.20,376.50) scale(0.6365,1)" font-family="Liberation Sans" font-size="11.3" fill="#2e2e2e">Your box contents if desired</text>
<rect x="456.0" y="265.4" width="224.2" height="167.2" fill="#ffc528"/>
<rect x="477.35" y="284.59999999999997" width="181.8" height="129.2" fill="#fff" stroke="#2a2a2a" stroke-width="0.6"/>
<rect x="482.20" y="321.20" width="171.9" height="35.8" fill="#dbe2fd"/>
<rect x="480.90" y="284.60" width="0.8" height="129.2" fill="#363636"/>
<rect x="654.70" y="284.60" width="0.8" height="129.2" fill="#363636"/>
<rect x="477.35" y="287.90" width="181.8" height="0.8" fill="#363636"/>
<rect x="477.35" y="409.80" width="181.8" height="0.8" fill="#363636"/>
<rect x="493.90" y="360.80" width="148.9" height="46.7" fill="#dbe2fd"/>
<rect x="493.90" y="360.60" width="148.9" height="0.8" fill="#8a90b0"/>
<g font-family="Liberation Sans" font-size="34.2" fill="#000"><text transform="translate(512.95,351.40) scale(0.5699,1)">B</text><text transform="translate(512.95,350.80) scale(0.5699,1)">B</text><text transform="translate(513.62,351.40) scale(0.5699,1)">B</text><text transform="translate(513.62,350.80) scale(0.5699,1)">B</text><text transform="translate(514.28,351.40) scale(0.5699,1)">B</text><text transform="translate(514.28,350.80) scale(0.5699,1)">B</text><text transform="translate(514.95,351.40) scale(0.5699,1)">B</text><text transform="translate(514.95,350.80) scale(0.5699,1)">B</text><text transform="translate(529.45,351.40) scale(0.4773,1)">O</text><text transform="translate(529.45,350.80) scale(0.4773,1)">O</text><text transform="translate(530.12,351.40) scale(0.4773,1)">O</text><text transform="translate(530.12,350.80) scale(0.4773,1)">O</text><text transform="translate(530.78,351.40) scale(0.4773,1)">O</text><text transform="translate(530.78,350.80) scale(0.4773,1)">O</text><text transform="translate(531.45,351.40) scale(0.4773,1)">O</text><text transform="translate(531.45,350.80) scale(0.4773,1)">O</text><text transform="translate(544.65,351.40) scale(0.5743,1)">X</text><text transform="translate(544.65,350.80) scale(0.5743,1)">X</text><text transform="translate(545.32,351.40) scale(0.5743,1)">X</text><text transform="translate(545.32,350.80) scale(0.5743,1)">X</text><text transform="translate(545.98,351.40) scale(0.5743,1)">X</text><text transform="translate(545.98,350.80) scale(0.5743,1)">X</text><text transform="translate(546.65,351.40) scale(0.5743,1)">X</text><text transform="translate(546.65,350.80) scale(0.5743,1)">X</text><text transform="translate(566.95,351.40) scale(0.5121,1)">T</text><text transform="translate(566.95,350.80) scale(0.5121,1)">T</text><text transform="translate(567.62,351.40) scale(0.5121,1)">T</text><text transform="translate(567.62,350.80) scale(0.5121,1)">T</text><text transform="translate(568.28,351.40) scale(0.5121,1)">T</text><text transform="translate(568.28,350.80) scale(0.5121,1)">T</text><text transform="translate(568.95,351.40) scale(0.5121,1)">T</text><text transform="translate(568.95,350.80) scale(0.5121,1)">T</text><text transform="translate(581.35,351.40) scale(0.3576,1)">I</text><text transform="translate(581.35,350.80) scale(0.3576,1)">I</text><text transform="translate(582.02,351.40) scale(0.3576,1)">I</text><text transform="translate(582.02,350.80) scale(0.3576,1)">I</text><text transform="translate(582.68,351.40) scale(0.3576,1)">I</text><text transform="translate(582.68,350.80) scale(0.3576,1)">I</text><text transform="translate(583.35,351.40) scale(0.3576,1)">I</text><text transform="translate(583.35,350.80) scale(0.3576,1)">I</text><text transform="translate(587.45,351.40) scale(0.5288,1)">T</text><text transform="translate(587.45,350.80) scale(0.5288,1)">T</text><text transform="translate(588.12,351.40) scale(0.5288,1)">T</text><text transform="translate(588.12,350.80) scale(0.5288,1)">T</text><text transform="translate(588.78,351.40) scale(0.5288,1)">T</text><text transform="translate(588.78,350.80) scale(0.5288,1)">T</text><text transform="translate(589.45,351.40) scale(0.5288,1)">T</text><text transform="translate(589.45,350.80) scale(0.5288,1)">T</text><text transform="translate(601.75,351.40) scale(0.4628,1)">L</text><text transform="translate(601.75,350.80) scale(0.4628,1)">L</text><text transform="translate(602.42,351.40) scale(0.4628,1)">L</text><text transform="translate(602.42,350.80) scale(0.4628,1)">L</text><text transform="translate(603.08,351.40) scale(0.4628,1)">L</text><text transform="translate(603.08,350.80) scale(0.4628,1)">L</text><text transform="translate(603.75,351.40) scale(0.4628,1)">L</text><text transform="translate(603.75,350.80) scale(0.4628,1)">L</text><text transform="translate(614.15,351.40) scale(0.4099,1)">E</text><text transform="translate(614.15,350.80) scale(0.4099,1)">E</text><text transform="translate(614.82,351.40) scale(0.4099,1)">E</text><text transform="translate(614.82,350.80) scale(0.4099,1)">E</text><text transform="translate(615.48,351.40) scale(0.4099,1)">E</text><text transform="translate(615.48,350.80) scale(0.4099,1)">E</text><text transform="translate(616.15,351.40) scale(0.4099,1)">E</text><text transform="translate(616.15,350.80) scale(0.4099,1)">E</text></g>
<text transform="translate(524.00,376.50) scale(0.6365,1)" font-family="Liberation Sans" font-size="11.3" fill="#2e2e2e">Your box contents if desired</text>
<rect x="230.4" y="434.4" width="224.2" height="167.2" fill="#2f9b48"/>
<rect x="251.75" y="453.59999999999997" width="181.8" height="129.2" fill="#fff" stroke="#2a2a2a" stroke-width="0.6"/>
<rect x="256.60" y="490.20" width="171.9" height="35.8" fill="#dbe2fd"/>
<rect x="255.30" y="453.60" width="0.8" height="129.2" fill="#363636"/>
<rect x="429.10" y="453.60" width="0.8" height="129.2" fill="#363636"/>
<rect x="251.75" y="456.90" width="181.8" height="0.8" fill="#363636"/>
<rect x="251.75" y="578.80" width="181.8" height="0.8" fill="#363636"/>
<rect x="268.30" y="529.80" width="148.9" height="46.7" fill="#dbe2fd"/>
<rect x="268.30" y="529.60" width="148.9" height="0.8" fill="#8a90b0"/>
<g font-family="Liberation Sans" font-size="34.2" fill="#000"><text transform="translate(287.15,520.40) scale(0.5699,1)">B</text><text transform="translate(287.15,519.80) scale(0.5699,1)">B</text><text transform="translate(287.82,520.40) scale(0.5699,1)">B</text><text transform="translate(287.82,519.80) scale(0.5699,1)">B</text><text transform="translate(288.48,520.40) scale(0.5699,1)">B</text><text transform="translate(288.48,519.80) scale(0.5699,1)">B</text><text transform="translate(289.15,520.40) scale(0.5699,1)">B</text><text transform="translate(289.15,519.80) scale(0.5699,1)">B</text><text transform="translate(303.65,520.40) scale(0.4773,1)">O</text><text transform="translate(303.65,519.80) scale(0.4773,1)">O</text><text transform="translate(304.32,520.40) scale(0.4773,1)">O</text><text transform="translate(304.32,519.80) scale(0.4773,1)">O</text><text transform="translate(304.98,520.40) scale(0.4773,1)">O</text><text transform="translate(304.98,519.80) scale(0.4773,1)">O</text><text transform="translate(305.65,520.40) scale(0.4773,1)">O</text><text transform="translate(305.65,519.80) scale(0.4773,1)">O</text><text transform="translate(318.85,520.40) scale(0.5743,1)">X</text><text transform="translate(318.85,519.80) scale(0.5743,1)">X</text><text transform="translate(319.52,520.40) scale(0.5743,1)">X</text><text transform="translate(319.52,519.80) scale(0.5743,1)">X</text><text transform="translate(320.18,520.40) scale(0.5743,1)">X</text><text transform="translate(320.18,519.80) scale(0.5743,1)">X</text><text transform="translate(320.85,520.40) scale(0.5743,1)">X</text><text transform="translate(320.85,519.80) scale(0.5743,1)">X</text><text transform="translate(341.15,520.40) scale(0.5121,1)">T</text><text transform="translate(341.15,519.80) scale(0.5121,1)">T</text><text transform="translate(341.82,520.40) scale(0.5121,1)">T</text><text transform="translate(341.82,519.80) scale(0.5121,1)">T</text><text transform="translate(342.48,520.40) scale(0.5121,1)">T</text><text transform="translate(342.48,519.80) scale(0.5121,1)">T</text><text transform="translate(343.15,520.40) scale(0.5121,1)">T</text><text transform="translate(343.15,519.80) scale(0.5121,1)">T</text><text transform="translate(355.55,520.40) scale(0.3576,1)">I</text><text transform="translate(355.55,519.80) scale(0.3576,1)">I</text><text transform="translate(356.22,520.40) scale(0.3576,1)">I</text><text transform="translate(356.22,519.80) scale(0.3576,1)">I</text><text transform="translate(356.88,520.40) scale(0.3576,1)">I</text><text transform="translate(356.88,519.80) scale(0.3576,1)">I</text><text transform="translate(357.55,520.40) scale(0.3576,1)">I</text><text transform="translate(357.55,519.80) scale(0.3576,1)">I</text><text transform="translate(361.65,520.40) scale(0.5288,1)">T</text><text transform="translate(361.65,519.80) scale(0.5288,1)">T</text><text transform="translate(362.32,520.40) scale(0.5288,1)">T</text><text transform="translate(362.32,519.80) scale(0.5288,1)">T</text><text transform="translate(362.98,520.40) scale(0.5288,1)">T</text><text transform="translate(362.98,519.80) scale(0.5288,1)">T</text><text transform="translate(363.65,520.40) scale(0.5288,1)">T</text><text transform="translate(363.65,519.80) scale(0.5288,1)">T</text><text transform="translate(375.95,520.40) scale(0.4628,1)">L</text><text transform="translate(375.95,519.80) scale(0.4628,1)">L</text><text transform="translate(376.62,520.40) scale(0.4628,1)">L</text><text transform="translate(376.62,519.80) scale(0.4628,1)">L</text><text transform="translate(377.28,520.40) scale(0.4628,1)">L</text><text transform="translate(377.28,519.80) scale(0.4628,1)">L</text><text transform="translate(377.95,520.40) scale(0.4628,1)">L</text><text transform="translate(377.95,519.80) scale(0.4628,1)">L</text><text transform="translate(388.35,520.40) scale(0.4099,1)">E</text><text transform="translate(388.35,519.80) scale(0.4099,1)">E</text><text transform="translate(389.02,520.40) scale(0.4099,1)">E</text><text transform="translate(389.02,519.80) scale(0.4099,1)">E</text><text transform="translate(389.68,520.40) scale(0.4099,1)">E</text><text transform="translate(389.68,519.80) scale(0.4099,1)">E</text><text transform="translate(390.35,520.40) scale(0.4099,1)">E</text><text transform="translate(390.35,519.80) scale(0.4099,1)">E</text></g>
<text transform="translate(298.20,545.50) scale(0.6365,1)" font-family="Liberation Sans" font-size="11.3" fill="#2e2e2e">Your box contents if desired</text>
<rect x="456.0" y="434.4" width="224.2" height="167.2" fill="#233a7b"/>
<rect x="477.35" y="453.59999999999997" width="181.8" height="129.2" fill="#fff" stroke="#2a2a2a" stroke-width="0.6"/>
<rect x="482.20" y="490.20" width="171.9" height="35.8" fill="#dbe2fd"/>
<rect x="480.90" y="453.60" width="0.8" height="129.2" fill="#363636"/>
<rect x="654.70" y="453.60" width="0.8" height="129.2" fill="#363636"/>
<rect x="477.35" y="456.90" width="181.8" height="0.8" fill="#363636"/>
<rect x="477.35" y="578.80" width="181.8" height="0.8" fill="#363636"/>
<rect x="493.90" y="529.80" width="148.9" height="46.7" fill="#dbe2fd"/>
<rect x="493.90" y="529.60" width="148.9" height="0.8" fill="#8a90b0"/>
<g font-family="Liberation Sans" font-size="34.2" fill="#000"><text transform="translate(512.95,520.40) scale(0.5699,1)">B</text><text transform="translate(512.95,519.80) scale(0.5699,1)">B</text><text transform="translate(513.62,520.40) scale(0.5699,1)">B</text><text transform="translate(513.62,519.80) scale(0.5699,1)">B</text><text transform="translate(514.28,520.40) scale(0.5699,1)">B</text><text transform="translate(514.28,519.80) scale(0.5699,1)">B</text><text transform="translate(514.95,520.40) scale(0.5699,1)">B</text><text transform="translate(514.95,519.80) scale(0.5699,1)">B</text><text transform="translate(529.45,520.40) scale(0.4773,1)">O</text><text transform="translate(529.45,519.80) scale(0.4773,1)">O</text><text transform="translate(530.12,520.40) scale(0.4773,1)">O</text><text transform="translate(530.12,519.80) scale(0.4773,1)">O</text><text transform="translate(530.78,520.40) scale(0.4773,1)">O</text><text transform="translate(530.78,519.80) scale(0.4773,1)">O</text><text transform="translate(531.45,520.40) scale(0.4773,1)">O</text><text transform="translate(531.45,519.80) scale(0.4773,1)">O</text><text transform="translate(544.65,520.40) scale(0.5743,1)">X</text><text transform="translate(544.65,519.80) scale(0.5743,1)">X</text><text transform="translate(545.32,520.40) scale(0.5743,1)">X</text><text transform="translate(545.32,519.80) scale(0.5743,1)">X</text><text transform="translate(545.98,520.40) scale(0.5743,1)">X</text><text transform="translate(545.98,519.80) scale(0.5743,1)">X</text><text transform="translate(546.65,520.40) scale(0.5743,1)">X</text><text transform="translate(546.65,519.80) scale(0.5743,1)">X</text><text transform="translate(566.95,520.40) scale(0.5121,1)">T</text><text transform="translate(566.95,519.80) scale(0.5121,1)">T</text><text transform="translate(567.62,520.40) scale(0.5121,1)">T</text><text transform="translate(567.62,519.80) scale(0.5121,1)">T</text><text transform="translate(568.28,520.40) scale(0.5121,1)">T</text><text transform="translate(568.28,519.80) scale(0.5121,1)">T</text><text transform="translate(568.95,520.40) scale(0.5121,1)">T</text><text transform="translate(568.95,519.80) scale(0.5121,1)">T</text><text transform="translate(581.35,520.40) scale(0.3576,1)">I</text><text transform="translate(581.35,519.80) scale(0.3576,1)">I</text><text transform="translate(582.02,520.40) scale(0.3576,1)">I</text><text transform="translate(582.02,519.80) scale(0.3576,1)">I</text><text transform="translate(582.68,520.40) scale(0.3576,1)">I</text><text transform="translate(582.68,519.80) scale(0.3576,1)">I</text><text transform="translate(583.35,520.40) scale(0.3576,1)">I</text><text transform="translate(583.35,519.80) scale(0.3576,1)">I</text><text transform="translate(587.45,520.40) scale(0.5288,1)">T</text><text transform="translate(587.45,519.80) scale(0.5288,1)">T</text><text transform="translate(588.12,520.40) scale(0.5288,1)">T</text><text transform="translate(588.12,519.80) scale(0.5288,1)">T</text><text transform="translate(588.78,520.40) scale(0.5288,1)">T</text><text transform="translate(588.78,519.80) scale(0.5288,1)">T</text><text transform="translate(589.45,520.40) scale(0.5288,1)">T</text><text transform="translate(589.45,519.80) scale(0.5288,1)">T</text><text transform="translate(601.75,520.40) scale(0.4628,1)">L</text><text transform="translate(601.75,519.80) scale(0.4628,1)">L</text><text transform="translate(602.42,520.40) scale(0.4628,1)">L</text><text transform="translate(602.42,519.80) scale(0.4628,1)">L</text><text transform="translate(603.08,520.40) scale(0.4628,1)">L</text><text transform="translate(603.08,519.80) scale(0.4628,1)">L</text><text transform="translate(603.75,520.40) scale(0.4628,1)">L</text><text transform="translate(603.75,519.80) scale(0.4628,1)">L</text><text transform="translate(614.15,520.40) scale(0.4099,1)">E</text><text transform="translate(614.15,519.80) scale(0.4099,1)">E</text><text transform="translate(614.82,520.40) scale(0.4099,1)">E</text><text transform="translate(614.82,519.80) scale(0.4099,1)">E</text><text transform="translate(615.48,520.40) scale(0.4099,1)">E</text><text transform="translate(615.48,519.80) scale(0.4099,1)">E</text><text transform="translate(616.15,520.40) scale(0.4099,1)">E</text><text transform="translate(616.15,519.80) scale(0.4099,1)">E</text></g>
<text transform="translate(524.00,545.50) scale(0.6365,1)" font-family="Liberation Sans" font-size="11.3" fill="#2e2e2e">Your box contents if desired</text>
</svg>
<!--/PAGE-->
</body></html>
